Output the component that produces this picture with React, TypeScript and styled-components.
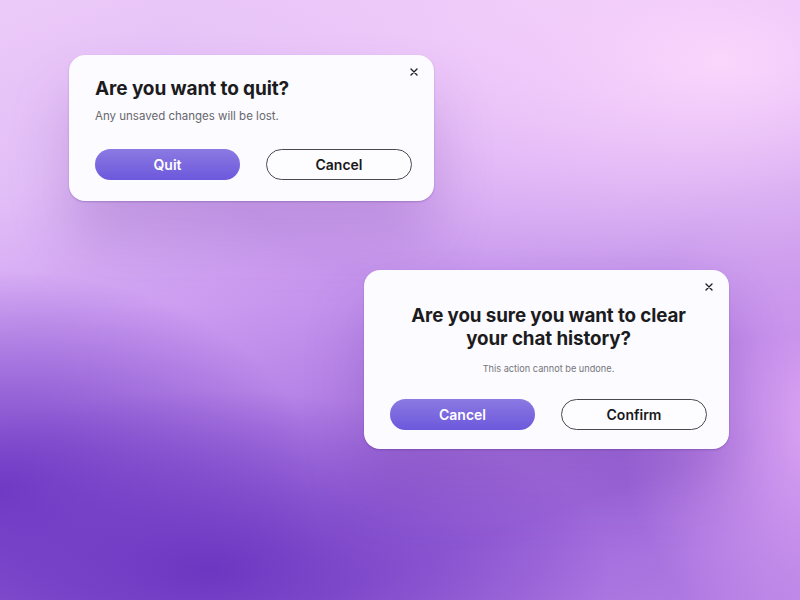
import React from 'react';
import styled, { createGlobalStyle } from 'styled-components';

const GlobalStyle = createGlobalStyle`
    html, body {
        margin: 0;
        padding: 0;
    }
    body {
        font-family: Inter, "Noto Sans", sans-serif;
        -webkit-font-smoothing: antialiased;
    }
`;

const Backdrop = styled.div`
    width: 800px;
    height: 600px;
    overflow: hidden;
    display: flex;
    flex-direction: column;
    align-items: flex-start;
    background:
        radial-gradient(ellipse 400px 180px at 210px 570px, rgba(106, 52, 192, 0.95), rgba(106, 52, 192, 0) 100%),
        radial-gradient(ellipse 320px 220px at 0px 490px, rgba(110, 56, 196, 0.95), rgba(110, 56, 196, 0) 100%),
        radial-gradient(ellipse 560px 280px at 720px 60px, rgba(250, 214, 252, 1), rgba(250, 214, 252, 0) 100%),
        radial-gradient(ellipse 200px 240px at 820px 420px, rgba(236, 180, 250, 0.8), rgba(236, 180, 250, 0) 100%),
        linear-gradient(160deg, #eccaf8 0%, #e2bef7 22%, #cfa0f2 40%, #b17ee4 60%, #9e68db 80%, #b47ee4 100%);
`;

const Dialog = styled.div<{ $left: number; $top: number; $height: number }>`
    position: relative;
    box-sizing: border-box;
    width: 365px;
    height: ${p => p.$height}px;
    margin-left: ${p => p.$left}px;
    margin-top: ${p => p.$top}px;
    padding: 0 22px 0 26px;
    border-radius: 16px;
    background: #fcfbff;
    box-shadow:
        0 1px 2px rgba(60, 20, 100, 0.25),
        0 40px 60px rgba(90, 40, 150, 0.22);
    display: flex;
    flex-direction: column;
`;

const CloseButton = styled.button`
    position: absolute;
    top: 9px;
    right: 12px;
    width: 16px;
    height: 16px;
    padding: 0;
    border: none;
    background: none;
    display: flex;
    align-items: center;
    justify-content: center;
    color: #222;
    cursor: pointer;
`;

const Title = styled.h2<{ $center?: boolean }>`
    margin: 0;
    font-size: ${p => (p.$center ? 18.8 : 19)}px;
    line-height: 23px;
    font-weight: 700;
    color: #1c1c1e;
    letter-spacing: -0.1px;
    text-align: ${p => (p.$center ? 'center' : 'left')};
`;

const Message = styled.p<{ $center?: boolean }>`
    margin: 0;
    font-size: ${p => (p.$center ? 9.2 : 11.5)}px;
    line-height: 16px;
    color: ${p => (p.$center ? '#76767c' : '#67676d')};
    text-align: ${p => (p.$center ? 'center' : 'left')};
`;

const Actions = styled.div`
    display: grid;
    grid-template-columns: 145px 146px;
    gap: 26px;
`;

const ActionButton = styled.button<{ $primary?: boolean }>`
    height: 31px;
    border-radius: 16px;
    font-family: Inter, sans-serif;
    font-size: 14px;
    font-weight: 600;
    cursor: pointer;
    border: ${p => (p.$primary ? 'none' : '1px solid #4a4a4e')};
    color: ${p => (p.$primary ? '#ffffff' : '#18181a')};
    background: ${p => (p.$primary
        ? 'linear-gradient(180deg, #8b7ae2 0%, #6c58dc 100%)'
        : '#fdfcff')};
`;

const CloseIcon = () => (
    <svg width="8" height="8" viewBox="0 0 8 8">
        <path d="M1 1L7 7M7 1L1 7" stroke="currentColor" strokeWidth="1.4" strokeLinecap="round" />
    </svg>
);

const Spacer = styled.div<{ $h: number }>`
    height: ${p => p.$h}px;
    flex-shrink: 0;
`;

const App = () => (
    <Backdrop>
        <GlobalStyle />
        <Dialog $left={69} $top={55} $height={146}>
            <CloseButton aria-label="Close"><CloseIcon /></CloseButton>
            <Spacer $h={22} />
            <Title>Are you want to quit?</Title>
            <Spacer $h={8} />
            <Message>Any unsaved changes will be lost.</Message>
            <Spacer $h={25} />
            <Actions>
                <ActionButton $primary>Quit</ActionButton>
                <ActionButton>Cancel</ActionButton>
            </Actions>
        </Dialog>
        <Dialog $left={364} $top={69} $height={179}>
            <CloseButton aria-label="Close"><CloseIcon /></CloseButton>
            <Spacer $h={34} />
            <Title $center>Are you sure you want to clear<br />your chat history?</Title>
            <Spacer $h={11} />
            <Message $center>This action cannot be undone.</Message>
            <Spacer $h={22} />
            <Actions>
                <ActionButton $primary>Cancel</ActionButton>
                <ActionButton>Confirm</ActionButton>
            </Actions>
        </Dialog>
    </Backdrop>
);

export default App;
